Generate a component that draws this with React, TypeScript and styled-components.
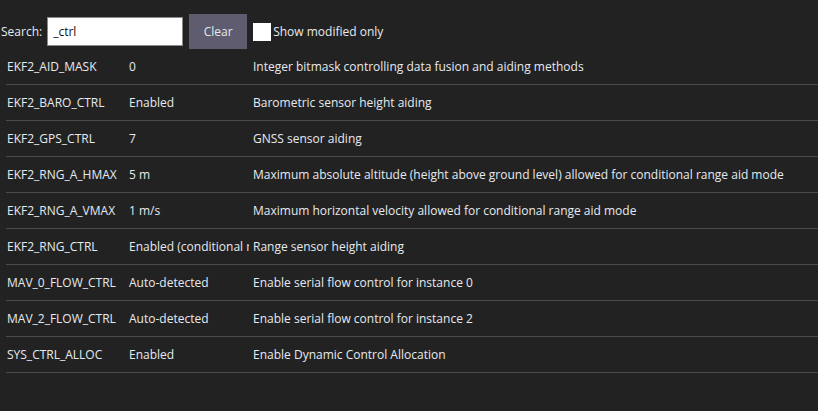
import React from "react";
import styled, { createGlobalStyle } from "styled-components";

const Global = createGlobalStyle`
  html, body { margin: 0; padding: 0; background: #222222; }
  body { font-family: "Open Sans", "Noto Sans", sans-serif; font-size: 12px; color: #e6eaf0; }
  #root { min-height: 411px; }
`;

const Page = styled.div`
  padding-top: 14px;
  min-height: 397px;
  overflow: hidden;
`;

const Toolbar = styled.div`
  display: flex;
  align-items: center;
  height: 35px;
`;

const Label = styled.label`
  margin-right: 5px;
  padding-left: 1px;
`;

const SearchInput = styled.input`
  box-sizing: border-box;
  width: 136px;
  height: 29px;
  border: 1px solid #8a8a8a;
  background: #ffffff;
  color: #111;
  font-family: "Open Sans", sans-serif;
  font-size: 12px;
  padding: 0 5px;
  outline: none;
  margin-right: 6px;
`;

const Button = styled.button`
  box-sizing: border-box;
  width: 58px;
  height: 35px;
  border: none;
  background: #5e5c6e;
  color: #e6eaf0;
  font-family: "Open Sans", sans-serif;
  font-size: 12px;
  margin-right: 6px;
  padding: 0;
`;

const CheckBox = styled.span`
  display: inline-block;
  width: 18px;
  height: 18px;
  background: #ffffff;
  margin-right: 2px;
`;

const Table = styled.div`
  margin-left: 6px;
`;

const Row = styled.div`
  display: grid;
  grid-template-columns: 122px 124px 1fr;
  height: 35px;
  align-items: center;
  border-bottom: 1px solid #4a4a4a;
`;

const Cell = styled.div<{ $gap?: number }>`
  padding-left: 1px;
  margin-right: ${(p) => p.$gap ?? 0}px;
  white-space: nowrap;
  overflow: hidden;
`;

const rows: [string, string, string][] = [
  ["EKF2_AID_MASK", "0", "Integer bitmask controlling data fusion and aiding methods"],
  ["EKF2_BARO_CTRL", "Enabled", "Barometric sensor height aiding"],
  ["EKF2_GPS_CTRL", "7", "GNSS sensor aiding"],
  ["EKF2_RNG_A_HMAX", "5 m", "Maximum absolute altitude (height above ground level) allowed for conditional range aid mode"],
  ["EKF2_RNG_A_VMAX", "1 m/s", "Maximum horizontal velocity allowed for conditional range aid mode"],
  ["EKF2_RNG_CTRL", "Enabled (conditional range aid)", "Range sensor height aiding"],
  ["MAV_0_FLOW_CTRL", "Auto-detected", "Enable serial flow control for instance 0"],
  ["MAV_2_FLOW_CTRL", "Auto-detected", "Enable serial flow control for instance 2"],
  ["SYS_CTRL_ALLOC", "Enabled", "Enable Dynamic Control Allocation"],
];

export default function App() {
  return (
    <>
      <Global />
      <Page>
        <Toolbar>
          <Label>Search:</Label>
          <SearchInput defaultValue="_ctrl" />
          <Button>Clear</Button>
          <CheckBox />
          <span>Show modified only</span>
        </Toolbar>
        <Table>
          {rows.map(([n, v, d]) => (
            <Row key={n}>
              <Cell>{n}</Cell>
              <Cell $gap={3}>{v}</Cell>
              <Cell>{d}</Cell>
            </Row>
          ))}
        </Table>
      </Page>
    </>
  );
}
